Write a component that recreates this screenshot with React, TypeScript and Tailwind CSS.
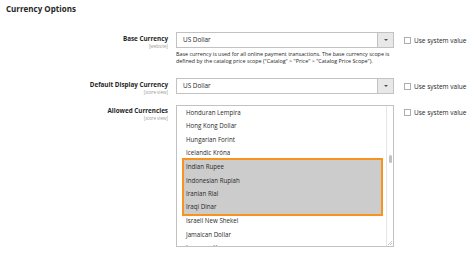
const currencies = [
  "Honduran Lempira",
  "Hong Kong Dollar",
  "Hungarian Forint",
  "Icelandic Króna",
];
const selected = ["Indian Rupee", "Indonesian Rupiah", "Iranian Rial", "Iraqi Dinar"];
const after = ["Israeli New Shekel", "Jamaican Dollar", "Japanese Yen"];

const Label = ({ title, scope }: { title: string; scope: string }) => (
  <div className="w-[169px] shrink-0 pr-[1px] text-right">
    <div className="text-[6.3px] font-bold leading-[9px] text-[#262626]">{title}</div>
    <div className="text-[4.5px] leading-[6px] text-[#999999]">{scope}</div>
  </div>
);

const SystemValue = () => (
  <label className="ml-[10px] flex items-center gap-[3px]">
    <span className="h-[7px] w-[7px] border border-[#adadad] bg-white" />
    <span className="text-[6.5px] text-[#262626]">Use system value</span>
  </label>
);

const Select = ({ value }: { value: string }) => (
  <div className="flex h-[16px] w-[218px] items-stretch border border-[#c2c2c2] bg-white">
    <div className="flex flex-1 items-center pl-[6px] text-[6.4px] text-[#262626]">{value}</div>
    <div className="flex w-[16px] items-center justify-center border-l border-[#c2c2c2] bg-[#e8e8e8]">
      <span className="h-0 w-0 border-x-[2px] border-t-[2px] border-x-transparent border-t-[#505050]" />
    </div>
  </div>
);

const Item = ({ name }: { name: string }) => (
  <div className="flex h-[13.4px] items-center pl-[9px] text-[6.2px] text-[#2a2a2a]">{name}</div>
);

export default function App() {
  return (
    <div className="h-[253px] w-[474px] bg-white font-['Open_Sans',sans-serif]">
      <h2 className="pl-[6px] pt-[3px] text-[8px] font-bold leading-[12px] text-[#262626]">
        Currency Options
      </h2>

      {/* Base Currency */}
      <div className="mt-[17px] flex items-start">
        <div className="pt-[2px]">
          <Label title="Base Currency" scope="[website]" />
        </div>
        <div className="ml-[7px]">
          <Select value="US Dollar" />
          <p className="mt-[3px] w-[218px] text-[5.4px] leading-[7px] text-[#262626]">
            Base currency is used for all online payment transactions. The base currency scope
            is defined by the catalog price scope ("Catalog" &gt; "Price" &gt; "Catalog Price Scope").
          </p>
        </div>
        <div className="pt-[4px]">
          <SystemValue />
        </div>
      </div>

      {/* Default Display Currency */}
      <div className="mt-[13px] flex items-start">
        <div className="pt-[2px]">
          <Label title="Default Display Currency" scope="[store view]" />
        </div>
        <div className="ml-[7px]">
          <Select value="US Dollar" />
        </div>
        <div className="pt-[4px]">
          <SystemValue />
        </div>
      </div>

      {/* Allowed Currencies */}
      <div className="mt-[10px] flex items-start">
        <div className="pt-[1px]">
          <Label title="Allowed Currencies" scope="[store view]" />
        </div>
        <div className="relative ml-[7px] flex h-[142px] w-[218px] overflow-hidden border border-[#c2c2c2] bg-white">
          <div className="flex-1">
            {currencies.map((c) => (
              <Item key={c} name={c} />
            ))}
            <div className="-my-[1.5px] ml-[5px] mr-[3px] border-2 border-[#f7941d] bg-[#cccccc]">
              {selected.map((c) => (
                <div
                  key={c}
                  className="flex h-[13.4px] items-center pl-[2px] text-[6.2px] text-[#2a2a2a]"
                >
                  {c}
                </div>
              ))}
            </div>
            {after.map((c) => (
              <Item key={c} name={c} />
            ))}
          </div>
          <div className="relative w-[7px] border-l border-[#e6e6e6] bg-white">
            <div className="absolute left-[2px] top-[49px] h-[8px] w-[3px] rounded-full bg-[#c1c1c1]" />
          </div>
          <svg className="absolute bottom-0 right-0" width="6" height="6" viewBox="0 0 6 6">
            <path d="M5 1 L1 5 M5 3 L3 5" stroke="#b0b0b0" strokeWidth="0.7" />
          </svg>
        </div>
        <div className="pt-[3px]">
          <SystemValue />
        </div>
      </div>
    </div>
  );
}
